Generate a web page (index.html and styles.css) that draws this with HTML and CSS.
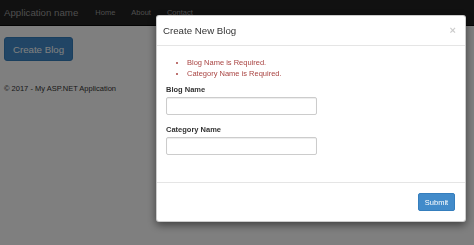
FILE: index.html
```html
<!DOCTYPE html>
<html lang="en">
<head>
    <meta charset="UTF-8">
    <meta name="viewport" content="width=device-width, initial-scale=1.0">
    <title>Create Blog - My ASP.NET Application</title>
    <link rel="stylesheet" href="styles.css">
</head>
<body>
    <div class="navbar">
        <a class="brand" href="#">Application name</a>
        <ul class="nav">
            <li><a href="#">Home</a></li>
            <li><a href="#">About</a></li>
            <li><a href="#">Contact</a></li>
        </ul>
    </div>

    <div class="body-content">
        <button class="btn btn-primary btn-lg">Create Blog</button>
        <footer class="footer">
            <p>&copy; 2017 - My ASP.NET Application</p>
        </footer>
    </div>

    <div class="modal-backdrop"></div>

    <div class="modal-dialog">
        <div class="modal-header">
            <button class="close" type="button">&times;</button>
            <h4 class="modal-title">Create New Blog</h4>
        </div>
        <div class="modal-body">
            <ul class="validation-errors">
                <li>Blog Name is Required.</li>
                <li>Category Name is Required.</li>
            </ul>
            <div class="form-group">
                <label for="blogName">Blog Name</label>
                <input type="text" id="blogName" class="form-control">
            </div>
            <div class="form-group">
                <label for="categoryName">Category Name</label>
                <input type="text" id="categoryName" class="form-control">
            </div>
        </div>
        <div class="modal-footer">
            <button class="btn btn-primary btn-submit">Submit</button>
        </div>
    </div>
</body>
</html>
```

FILE: styles.css
```css
body {
    font-family: 'Liberation Sans', Arial, sans-serif;
    font-size: 7.5px;
    line-height: 11px;
    color: #333;
    background-color: #fff;
    margin: 0;
    padding: 0;
}

.navbar {
    display: flex;
    align-items: center;
    height: 26px;
    background-color: #222;
    border-bottom: 1px solid #080808;
    box-sizing: border-box;
    padding-left: 4px;
}

.brand {
    color: #9d9d9d;
    font-size: 9.7px;
    text-decoration: none;
    margin-right: 9px;
}

.nav {
    display: flex;
    list-style: none;
    margin: 0;
    padding: 0;
}

.nav a {
    display: block;
    color: #9d9d9d;
    text-decoration: none;
    padding: 0 8px;
}

.body-content {
    padding: 11px 4px 0;
}

.btn {
    font-family: inherit;
    color: #fff;
    border: 1px solid #357ebd;
    background-color: #428bca;
    cursor: pointer;
}

.btn-lg {
    display: block;
    width: 69px;
    height: 24px;
    padding: 0;
    font-size: 9.7px;
    border-radius: 3px;
}

.footer p {
    margin: 22px 0 0;
}

.modal-backdrop {
    position: fixed;
    top: 0;
    left: 0;
    right: 0;
    bottom: 0;
    background-color: rgba(0, 0, 0, 0.5);
}

.modal-dialog {
    position: fixed;
    top: 15px;
    left: 156px;
    width: 310px;
    box-sizing: border-box;
    background-color: #fff;
    border: 1px solid rgba(0, 0, 0, 0.2);
    border-radius: 3px;
    box-shadow: 0 3px 8px rgba(0, 0, 0, 0.5);
}

.modal-header {
    padding: 9px 9px 8px 6px;
    border-bottom: 1px solid #e5e5e5;
}

.modal-title {
    margin: 0;
    font-size: 9.7px;
    line-height: 12px;
    font-weight: normal;
}

.close {
    float: right;
    margin-top: -1px;
    padding: 0;
    border: none;
    background: transparent;
    font-family: inherit;
    font-size: 11px;
    font-weight: bold;
    line-height: 12px;
    color: #000;
    opacity: 0.2;
}

.modal-body {
    padding: 11px 9px 18px;
}

.validation-errors {
    margin: 0 0 5px;
    padding-left: 21px;
    color: #a94442;
}

.form-group {
    margin-bottom: 9px;
}

.form-group label {
    display: block;
    font-weight: bold;
    margin-bottom: 2px;
}

.form-control {
    display: block;
    width: 151px;
    height: 18px;
    box-sizing: border-box;
    border: 1px solid #ccc;
    border-radius: 2px;
    box-shadow: inset 0 1px 1px rgba(0, 0, 0, 0.075);
    margin: 0;
}

.modal-footer {
    display: flex;
    justify-content: flex-end;
    padding: 10px 10px 10px;
    border-top: 1px solid #e5e5e5;
}

.btn-submit {
    width: 37px;
    height: 18px;
    padding: 0;
    font-size: 7.5px;
    border-radius: 2px;
}
```
